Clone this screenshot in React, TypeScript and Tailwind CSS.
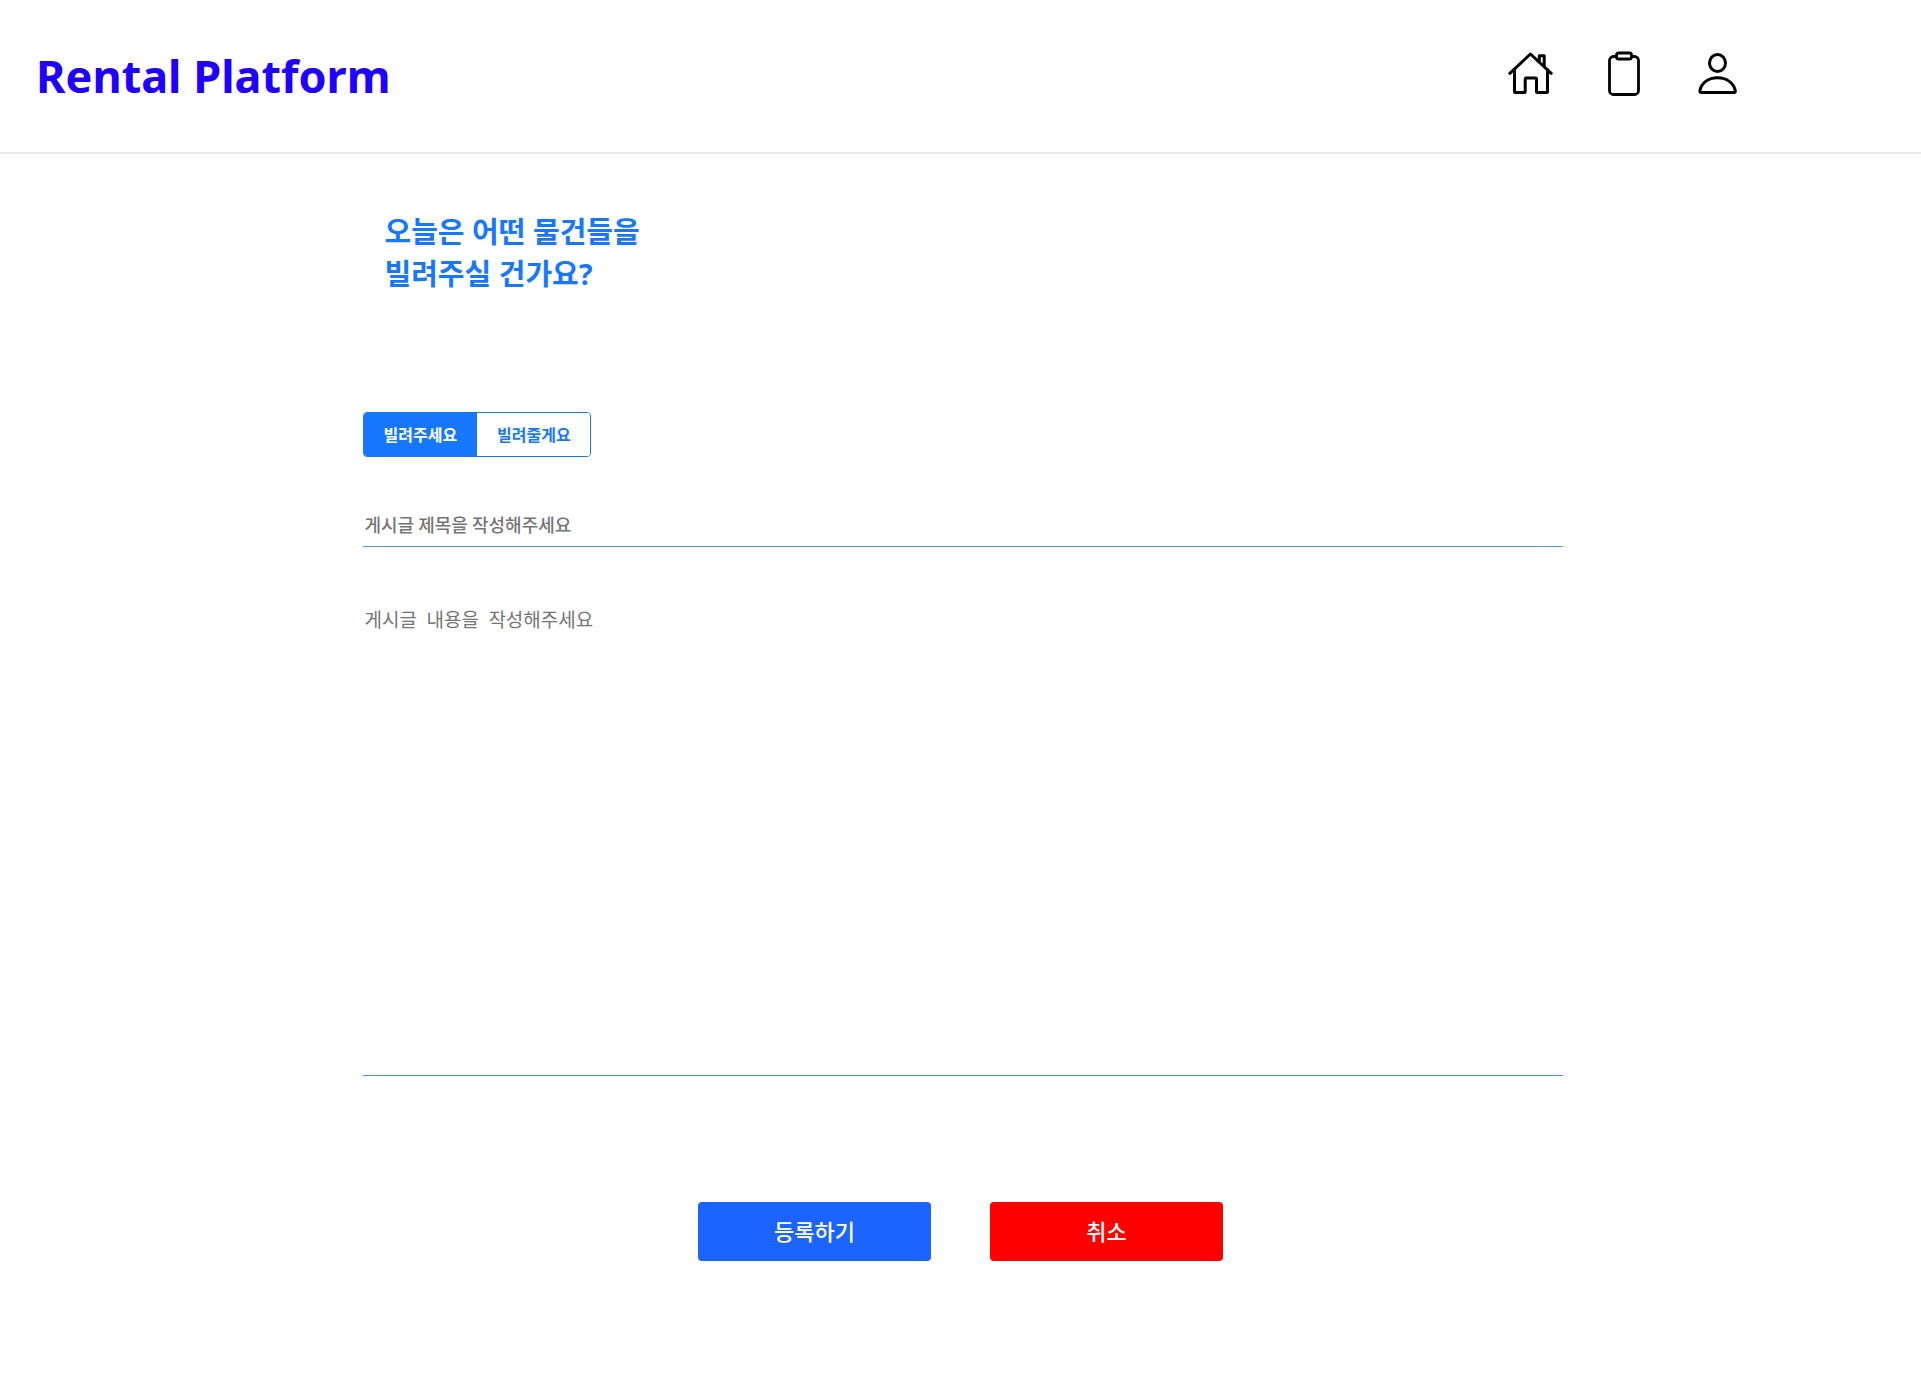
import { useState } from "react";

const kinds = ["빌려주세요", "빌려줄게요"];

function HomeIcon() {
  return (
    <svg viewBox="0 0 48 48" className="size-12" fill="none" stroke="currentColor" strokeWidth="3" strokeLinecap="round" strokeLinejoin="round" aria-hidden="true">
      <path d="M2.8 24.300 23.500 5 44.200 24.300" />
      <path d="M7.500 20.500V42.500Q7.500 43.500 8.500 43.500H17.200Q18.200 43.500 18.200 42.500V30Q18.200 29 19.200 29H28.500Q29.500 29 29.500 30V42.500Q29.500 43.500 30.500 43.500H39.500Q40.500 43.500 40.500 42.500V20.500" />
      <path d="M32.300 12.500V6.700H37.200V16.500" />
    </svg>
  );
}

function ClipboardIcon() {
  return (
    <svg viewBox="0 0 48 48" className="size-12" fill="none" stroke="currentColor" strokeWidth="2.8" strokeLinecap="round" strokeLinejoin="round" aria-hidden="true">
      <path d="M16.500 7.500H13.500A4 4 0 0 0 9.500 11.500V41.500A4 4 0 0 0 13.500 45.500H34.500A4 4 0 0 0 38.500 41.500V11.500A4 4 0 0 0 34.500 7.500H31.500" />
      <rect x="16.500" y="4" width="15" height="6" rx="2" />
    </svg>
  );
}

function PersonIcon() {
  return (
    <svg viewBox="0 0 48 48" className="size-12" fill="none" stroke="currentColor" strokeWidth="3" strokeLinecap="round" strokeLinejoin="round" aria-hidden="true">
      <ellipse cx="24.500" cy="14" rx="8" ry="8.600" />
      <path d="M8.300 43.600H40.700Q42.500 43.600 42.300 41.800C40.800 34 33.800 28.800 24.500 28.800S8.200 34 6.900 41.800Q6.700 43.600 8.300 43.600Z" />
    </svg>
  );
}

export default function App() {
  const [kind, setKind] = useState(kinds[0]);
  return (
    <div className="min-h-screen bg-white font-['Noto_Sans','Noto_Sans_CJK_KR',sans-serif]">
      <header className="flex h-[154px] items-center justify-between border-b-2 border-[#e8e8e8] pr-45 pl-9">
        <a href="#" className="pb-0.5 text-[45px] leading-none font-bold whitespace-nowrap text-[#1f00ff]">
          Rental Platform
        </a>
        <nav className="flex gap-[45px] pb-1.5 text-black">
          <a href="#" aria-label="홈"><HomeIcon /></a>
          <a href="#" aria-label="게시판"><ClipboardIcon /></a>
          <a href="#" aria-label="내 정보"><PersonIcon /></a>
        </nav>
      </header>

      <main className="mx-auto w-full max-w-[1204px] pt-[57px] pl-1">
        <h1 className="pl-[22px] text-[29px] leading-[42px] font-bold text-[#1877ff]">
          오늘은 어떤 물건들을
          <br />
          빌려주실 건가요?
        </h1>

        <form onSubmit={(e) => e.preventDefault()}>
          <div className="mt-[117px] inline-flex h-[45px] overflow-hidden rounded-[4px] border border-[#1877ff]">
            {kinds.map((k) => (
              <button
                key={k}
                type="button"
                aria-pressed={k === kind}
                onClick={() => setKind(k)}
                className={
                  "border-[#1877ff] pr-[19px] pl-5 pb-0.5 font-['Noto_Sans_CJK_KR',sans-serif] text-[16px] font-bold first:border-r " +
                  (k === kind ? "bg-[#1877ff] text-white" : "bg-white text-[#1877ff]")
                }
              >
                {k}
              </button>
            ))}
          </div>

          <input
            type="text"
            aria-label="게시글 제목"
            placeholder="게시글 제목을 작성해주세요"
            className="mt-[45px] block h-[45px] w-full border-b border-[#4a96ff] px-0.5 font-['Noto_Sans_CJK_KR',sans-serif] text-[18px] font-medium outline-none placeholder:text-[#757575]"
          />
          <textarea
            aria-label="게시글 내용"
            placeholder="게시글 내용을 작성해주세요"
            className="mt-[58px] block h-[471px] w-full resize-none border-b border-[#4a96ff] px-0.5 font-['Noto_Sans_Mono_CJK_KR','Noto_Sans_CJK_KR',monospace] text-[19px] leading-[28px] outline-none placeholder:text-[#757575]"
          />

          <div className="mt-[126px] flex justify-center gap-[59px] pr-1 font-['Noto_Sans_CJK_KR',sans-serif] text-[22px] leading-8 font-medium text-white">
            <button type="submit" className="h-[59px] w-[233px] rounded-[4px] bg-[#1b64ff] pb-1">등록하기</button>
            <button type="button" className="h-[59px] w-[233px] rounded-[4px] bg-[#ff0000] pb-1">취소</button>
          </div>
        </form>
      </main>
    </div>
  );
}
